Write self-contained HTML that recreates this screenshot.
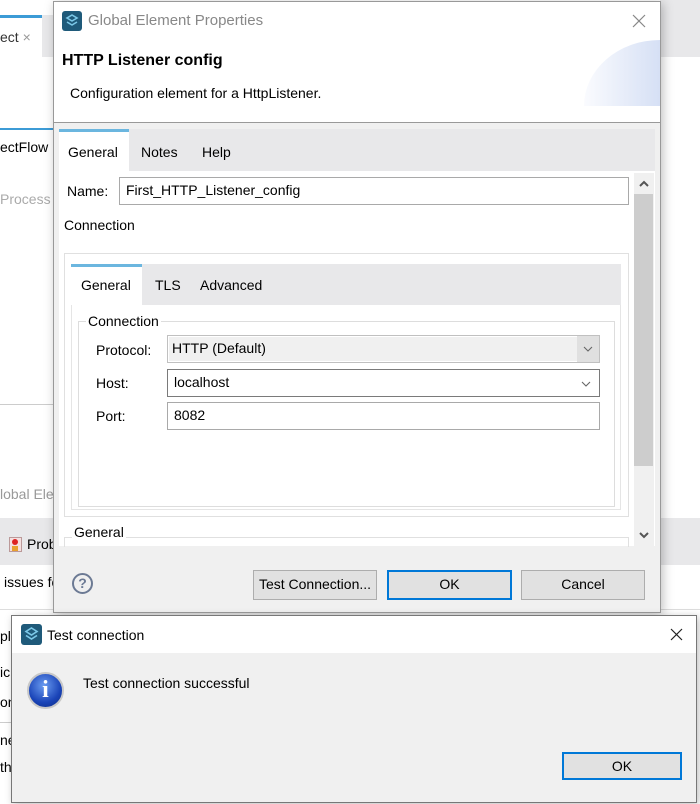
<!DOCTYPE html><html><head><style>
*{margin:0;padding:0;box-sizing:border-box}
body{width:700px;height:804px;position:relative;overflow:hidden;background:#fff;font-family:"Segoe UI","Liberation Sans","DejaVu Sans",sans-serif;font-size:14px;color:#000}
.a{position:absolute}
.t{position:absolute;white-space:nowrap;line-height:1}
.btn{position:absolute;background:#e1e1e1;border:1px solid #adadad;text-align:center;line-height:27px;font-size:14px}
.blue{border:2px solid #0078d7;line-height:25px}
.fld{position:absolute;background:#fff;border:1px solid #a9a9a9;padding-left:6px;line-height:25px;font-size:14px}
</style></head><body>
<div class="a" style="left:0;top:15px;width:42px;height:42px;background:#fff;border-top:3px solid #3c9bd6"></div>
<div class="a" style="left:42px;top:15px;width:12px;height:42px;background:#e8e8ea"></div>
<div class="t" style="left:0;top:30px;color:#333">ect <span style="color:#999">×</span></div>
<div class="a" style="left:660px;top:0;width:40px;height:57px;background:#e8e8ea"></div>
<div class="a" style="left:0;top:128px;width:53px;height:2px;background:#3c9bd6"></div>
<div class="t" style="left:0;top:140px">ectFlow</div>
<div class="t" style="left:0;top:192px;color:#aaa">Process</div>
<div class="a" style="left:0;top:404px;width:53px;height:1px;background:#ccc"></div>
<div class="t" style="left:0;top:487px;color:#999">lobal Ele</div>
<div class="a" style="left:0;top:518px;width:53px;height:47px;background:#e8e8ea"></div>
<div class="a" style="left:660px;top:518px;width:40px;height:47px;background:#e8e8ea"></div>
<div class="a" style="left:9px;top:537px;width:13px;height:15px;background:#f4e0e0;border:1px solid #b99"><div class="a" style="left:2px;top:1px;width:6px;height:6px;border-radius:3px;background:#d22"></div><div class="a" style="left:2px;top:8px;width:6px;height:5px;background:#e8a030"></div></div>
<div class="t" style="left:27px;top:537px">Prob</div>
<div class="t" style="left:4px;top:575px">issues fo</div>
<div class="a" style="left:0;top:609px;width:700px;height:1px;background:#ddd"></div>
<div class="t" style="left:0;top:629px">pl</div>
<div class="t" style="left:0;top:665px">ic</div>
<div class="t" style="left:0;top:695px">on</div>
<div class="a" style="left:0;top:722px;width:11px;height:1px;background:#ccc"></div>
<div class="t" style="left:0;top:733px">ne</div>
<div class="t" style="left:0;top:760px">th</div>

<div class="a" style="left:53px;top:1px;width:608px;height:612px;border:1px solid #999;background:#fff;box-shadow:2px 2px 10px rgba(0,0,0,.25)">
 <div class="a" style="left:8px;top:9px;width:20px;height:20px;border-radius:3px;background:#1f5a7a"><svg width="20" height="20"><path d="M10 4 L15 7 L10 10 L5 7Z M5 11 L10 14 L15 11" stroke="#7cc8e8" stroke-width="1.6" fill="none"/></svg></div>
 <div class="t" style="left:34px;top:11px;color:#888;font-size:15px">Global Element Properties</div>
 <svg class="a" style="left:578px;top:12px" width="14" height="14"><path d="M1 1L13 13M13 1L1 13" stroke="#888" stroke-width="1.2"/></svg>
 <div class="a" style="left:530px;top:38px;width:76px;height:66px;border-radius:100% 0 0 0;background:linear-gradient(90deg,#fafbfe,#d6e0f5)"></div>
 <div class="t" style="left:8px;top:51px;font-weight:bold;font-size:16px">HTTP Listener config</div>
 <div class="t" style="left:16px;top:84px">Configuration element for a HttpListener.</div>
 <div class="a" style="left:0;top:120px;width:606px;height:1px;background:#999"></div>
 <div class="a" style="left:0;top:121px;width:606px;height:489px;background:#f0f0f0"></div>
 <div class="a" style="left:5px;top:127px;width:596px;height:42px;background:#e8e8ea"></div>
 <div class="a" style="left:5px;top:127px;width:70px;height:43px;background:#fff;border-top:3px solid #6bb6df"></div>
 <div class="t" style="left:14px;top:143px">General</div>
 <div class="t" style="left:87px;top:143px">Notes</div>
 <div class="t" style="left:148px;top:143px">Help</div>
 <div class="a" style="left:5px;top:169px;width:596px;height:375px;background:#fff"></div>
 <div class="a" style="left:580px;top:171px;width:20px;height:373px;background:#f0f0f0"></div>
 <div class="a" style="left:580px;top:192px;width:19px;height:272px;background:#cdcdcd"></div>
 <svg class="a" style="left:585px;top:178px" width="10" height="8"><path d="M1 6L5 2L9 6" stroke="#555" stroke-width="2" fill="none"/></svg>
 <svg class="a" style="left:585px;top:529px" width="10" height="8"><path d="M1 2L5 6L9 2" stroke="#555" stroke-width="2" fill="none"/></svg>
 <div class="t" style="left:13px;top:182px">Name:</div>
 <div class="fld" style="left:65px;top:175px;width:510px;height:28px">First_HTTP_Listener_config</div>
 <div class="t" style="left:10px;top:216px">Connection</div>
 <div class="a" style="left:10px;top:251px;width:565px;height:264px;border:1px solid #e0e0e0"></div>
 <div class="a" style="left:17px;top:262px;width:550px;height:41px;background:#e8e8ea"></div>
 <div class="a" style="left:17px;top:262px;width:71px;height:41px;background:#fff;border-top:3px solid #6bb6df"></div>
 <div class="t" style="left:27px;top:276px">General</div>
 <div class="t" style="left:101px;top:276px">TLS</div>
 <div class="t" style="left:146px;top:276px">Advanced</div>
 <div class="a" style="left:17px;top:303px;width:550px;height:205px;border:1px solid #e5e5e5;border-top:none"></div>
 <div class="a" style="left:24px;top:319px;width:537px;height:186px;border:1px solid #ddd"></div>
 <div class="t" style="left:32px;top:312px;background:#fff;padding:0 2px">Connection</div>
 <div class="t" style="left:42px;top:341px">Protocol:</div>
 <div class="t" style="left:42px;top:374px">Host:</div>
 <div class="t" style="left:42px;top:407px">Port:</div>
 <div class="fld" style="left:113px;top:333px;width:433px;height:28px;background:#f0f0f0;border-color:#c0c0c0;padding-left:4px;box-shadow:inset 0 0 0 1px #fff">HTTP (Default)<div class="a" style="right:0;top:0;width:22px;height:26px;background:#e0e0e0"><svg class="a" style="left:6px;top:10px" width="10" height="6"><path d="M1 1L5 5L9 1" stroke="#666" stroke-width="1.1" fill="none"/></svg></div></div>
 <div class="fld" style="left:113px;top:367px;width:433px;height:28px;border-color:#7a7a7a">localhost<svg class="a" style="right:8px;top:11px" width="10" height="6"><path d="M1 1L5 5L9 1" stroke="#666" stroke-width="1.1" fill="none"/></svg></div>
 <div class="fld" style="left:113px;top:400px;width:433px;height:28px">8082</div>
 <div class="a" style="left:10px;top:535px;width:565px;height:10px;border:1px solid #e0e0e0;border-bottom:none"></div>
 <div class="t" style="left:18px;top:523px;background:#fff;padding:0 2px">General</div>
 <div class="a" style="left:18px;top:571px;width:21px;height:21px;border:2px solid #6c7a94;border-radius:50%;color:#6c7a94;font-weight:bold;font-size:14px;text-align:center;line-height:17px">?</div>
 <div class="btn" style="left:199px;top:568px;width:124px;height:30px">Test Connection...</div>
 <div class="btn blue" style="left:333px;top:568px;width:125px;height:30px">OK</div>
 <div class="btn" style="left:467px;top:568px;width:124px;height:30px">Cancel</div>
</div>

<div class="a" style="left:11px;top:615px;width:686px;height:188px;border:1px solid #777;background:#f0f0f0;box-shadow:2px 2px 8px rgba(0,0,0,.25)">
 <div class="a" style="left:0;top:0;width:684px;height:37px;background:#fff"></div>
 <div class="a" style="left:9px;top:8px;width:21px;height:21px;border-radius:3px;background:#1f5a7a"><svg width="21" height="21"><path d="M10.5 4 L16 7.5 L10.5 11 L5 7.5Z M5 11.5 L10.5 15 L16 11.5" stroke="#7cc8e8" stroke-width="1.6" fill="none"/></svg></div>
 <div class="t" style="left:35px;top:12px">Test connection</div>
 <svg class="a" style="left:658px;top:12px" width="13" height="13"><path d="M1 1L12 12M12 1L1 12" stroke="#222" stroke-width="1.2"/></svg>
 <div class="a" style="left:15px;top:56px;width:37px;height:37px;border-radius:50%;background:radial-gradient(circle at 45% 35%,#6b9cf0,#1a44b8 60%,#0c2a80);border:2px solid #c8c8c8;color:#fff;font-weight:bold;font-family:'Liberation Serif',serif;font-size:24px;text-align:center;line-height:33px">i</div>
 <div class="t" style="left:71px;top:60px">Test connection successful</div>
 <div class="btn blue" style="left:550px;top:136px;width:120px;height:28px">OK</div>
</div>
</body></html>
